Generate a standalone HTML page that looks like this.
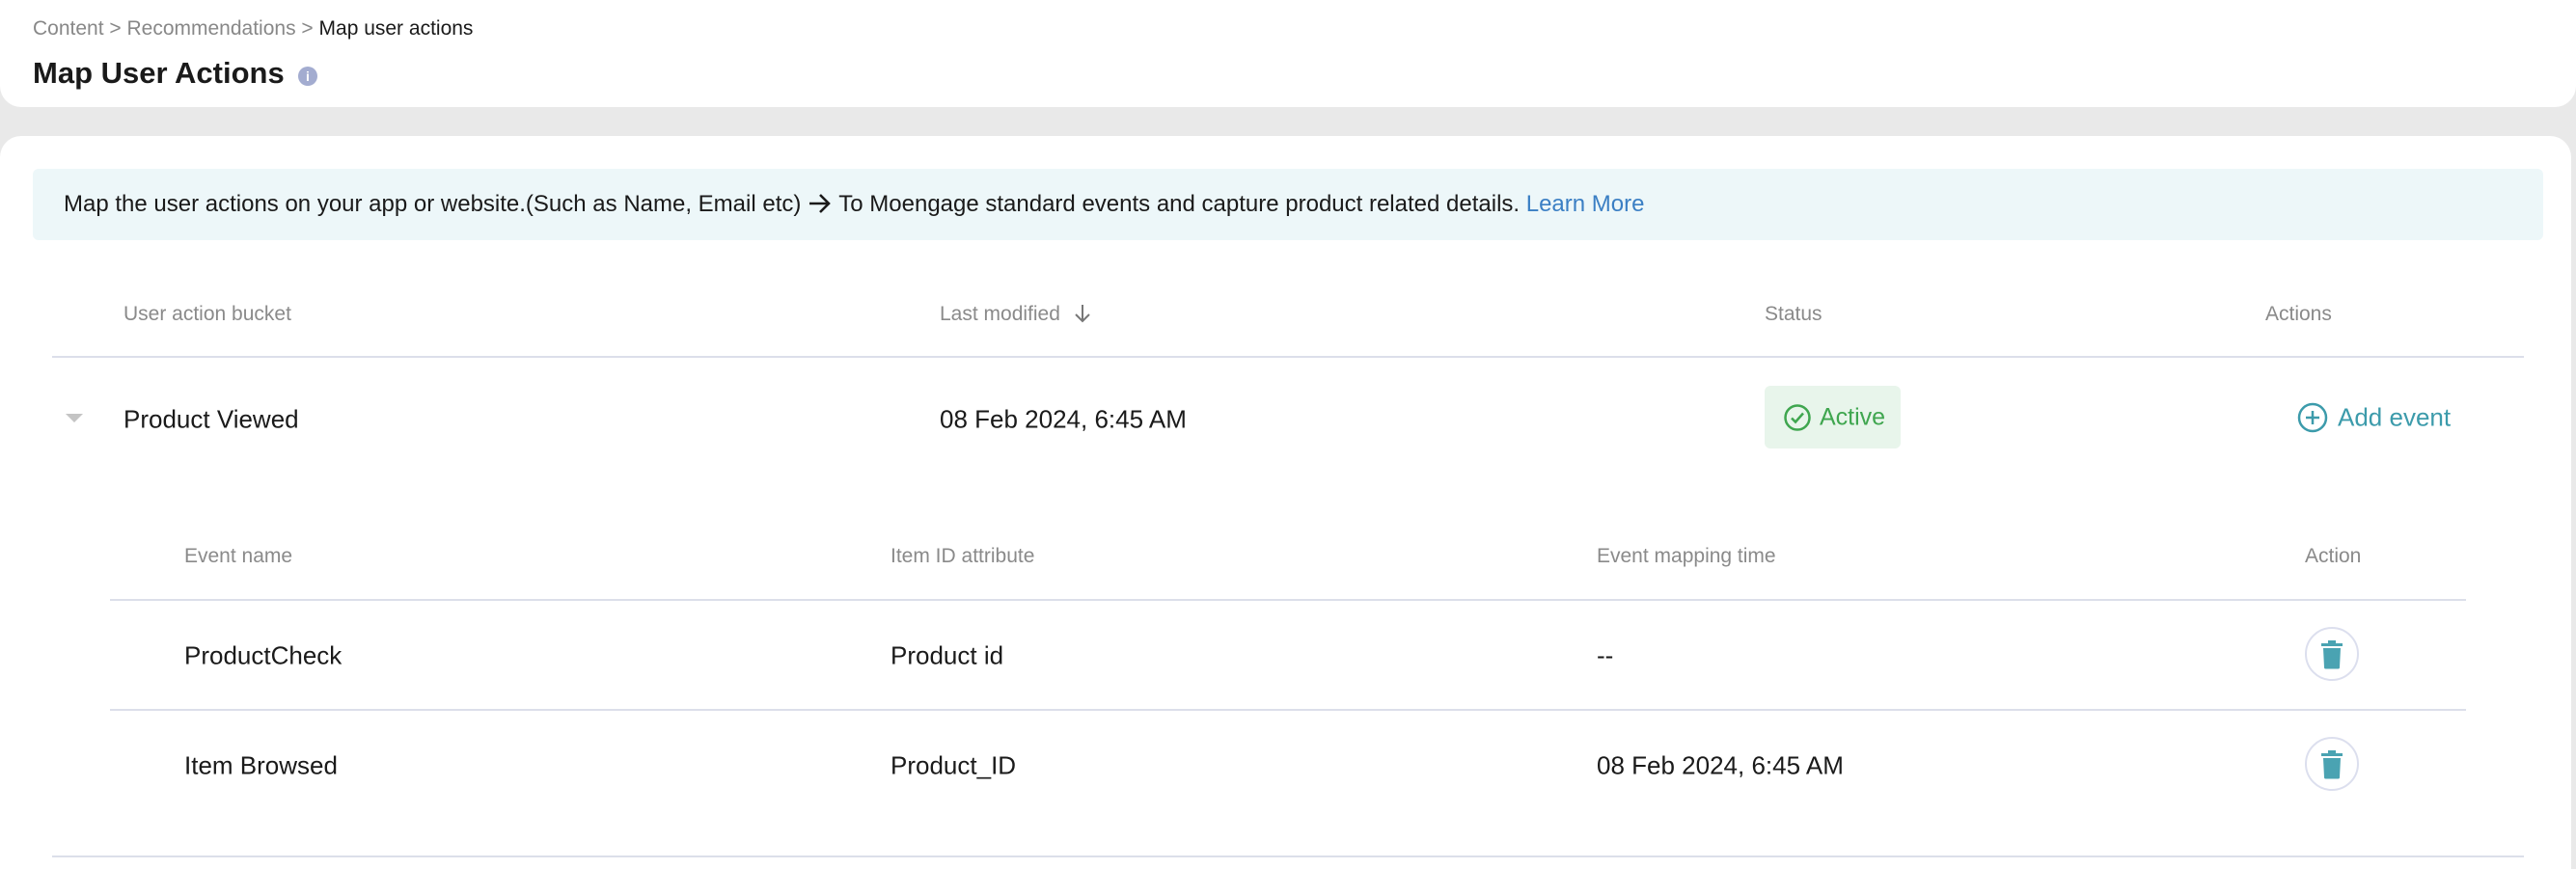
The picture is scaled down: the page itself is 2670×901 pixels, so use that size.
<!DOCTYPE html>
<html><head><meta charset="utf-8"><style>
*{margin:0;padding:0;box-sizing:border-box}
body{width:2670px;height:890px;background:#e9e9e9;font-family:"Liberation Sans",sans-serif;position:relative;overflow:hidden;color:#1a1a1a}
.a{position:absolute;white-space:nowrap}
.card1{position:absolute;left:0;top:0;width:2670px;height:111px;background:#fff;border-radius:0 0 22px 22px}
.card2{position:absolute;left:0;top:141px;width:2665px;height:760px;background:#fff;border-radius:22px 22px 0 0}
.hd{font-size:21px;color:#8a8a8a;transform:translateY(-50%)}
.tx{font-size:26px;color:#1a1a1a;transform:translateY(-50%)}
.ln{position:absolute;height:2px;background:#dcdfea}
.trash{position:absolute;width:56px;height:56px;border:2px solid #dcdfee;border-radius:50%;transform:translate(-50%,-50%)}
</style></head><body>
<div class="card1"></div>
<div class="a" style="left:34px;top:18px;font-size:21px;color:#888">Content &gt; Recommendations &gt; <span style="color:#1a1a1a">Map user actions</span></div>
<div class="a" style="left:34px;top:58px;font-size:31px;font-weight:bold;color:#1a1a1a">Map User Actions</div>
<div class="a" style="left:309px;top:69px;width:20px;height:20px;border-radius:50%;background:#a3acd0;color:#fff;font-size:14px;font-weight:bold;text-align:center;line-height:20px">i</div>
<div class="card2"></div>
<div class="a" style="left:34px;top:175px;width:2602px;height:74px;background:#edf7f9;border-radius:6px"></div>
<div class="a tx" style="left:66px;top:212px;font-size:24px">Map the user actions on your app or website.(Such as Name, Email etc) <svg width="26" height="22" viewBox="0 0 26 22" style="vertical-align:-3px"><path d="M2 11h20M13 2l9 9-9 9" fill="none" stroke="#1a1a1a" stroke-width="2.6"/></svg> To Moengage standard events and capture product related details. <span style="color:#3b7fc4">Learn More</span></div>
<div class="a hd" style="left:128px;top:326px">User action bucket</div>
<div class="a hd" style="left:974px;top:326px">Last modified <svg width="22" height="22" viewBox="0 0 22 22" style="vertical-align:-4px;margin-left:6px"><path d="M11 2v17M4 12l7 7 7-7" fill="none" stroke="#777" stroke-width="2"/></svg></div>
<div class="a hd" style="left:1829px;top:326px">Status</div>
<div class="a hd" style="left:2348px;top:326px">Actions</div>
<div class="ln" style="left:54px;top:369px;width:2562px"></div>
<div class="a" style="left:68px;top:429px;width:0;height:0;border-left:9px solid transparent;border-right:9px solid transparent;border-top:9px solid #c4c4c4"></div>
<div class="a tx" style="left:128px;top:435px">Product Viewed</div>
<div class="a tx" style="left:974px;top:435px">08 Feb 2024, 6:45 AM</div>
<div class="a" style="left:1829px;top:400px;width:141px;height:65px;background:#e8f5eb;border-radius:6px"></div>
<svg class="a" style="left:1848px;top:418px" width="30" height="30" viewBox="0 0 30 30"><circle cx="15" cy="15" r="12.5" fill="none" stroke="#3fa64f" stroke-width="2.5"/><path d="M9 15.5l4 4 8-9" fill="none" stroke="#3fa64f" stroke-width="2.5"/></svg>
<div class="a tx" style="left:1886px;top:433px;color:#3fa64f;font-size:25px">Active</div>
<svg class="a" style="left:2381px;top:417px" width="32" height="32" viewBox="0 0 32 32"><circle cx="16" cy="16" r="14" fill="none" stroke="#3c9bab" stroke-width="2.5"/><path d="M16 9v14M9 16h14" stroke="#3c9bab" stroke-width="2.5"/></svg>
<div class="a tx" style="left:2423px;top:433px;color:#3c9bab;font-size:26px">Add event</div>
<div class="a hd" style="left:191px;top:577px">Event name</div>
<div class="a hd" style="left:923px;top:577px">Item ID attribute</div>
<div class="a hd" style="left:1655px;top:577px">Event mapping time</div>
<div class="a hd" style="left:2389px;top:577px">Action</div>
<div class="ln" style="left:114px;top:621px;width:2442px"></div>
<div class="a tx" style="left:191px;top:680px">ProductCheck</div>
<div class="a tx" style="left:923px;top:680px">Product id</div>
<div class="a tx" style="left:1655px;top:680px">--</div>
<div class="trash" style="left:2417px;top:678px"></div>
<div class="ln" style="left:114px;top:735px;width:2442px"></div>
<div class="a tx" style="left:191px;top:794px">Item Browsed</div>
<div class="a tx" style="left:923px;top:794px">Product_ID</div>
<div class="a tx" style="left:1655px;top:794px">08 Feb 2024, 6:45 AM</div>
<div class="trash" style="left:2417px;top:792px"></div>
<svg class="a" style="left:2405px;top:664px" width="24" height="30" viewBox="0 0 24 30"><rect x="8" y="0" width="8" height="3" fill="#4aa3b2"/><rect x="1" y="3" width="22" height="3" fill="#4aa3b2"/><path d="M3 8h18l-1 20q0 1.5-1.5 1.5h-13Q4 29.5 4 28z" fill="#4aa3b2"/></svg>
<svg class="a" style="left:2405px;top:778px" width="24" height="30" viewBox="0 0 24 30"><rect x="8" y="0" width="8" height="3" fill="#4aa3b2"/><rect x="1" y="3" width="22" height="3" fill="#4aa3b2"/><path d="M3 8h18l-1 20q0 1.5-1.5 1.5h-13Q4 29.5 4 28z" fill="#4aa3b2"/></svg>
<div class="ln" style="left:54px;top:887px;width:2562px"></div>
</body></html>
